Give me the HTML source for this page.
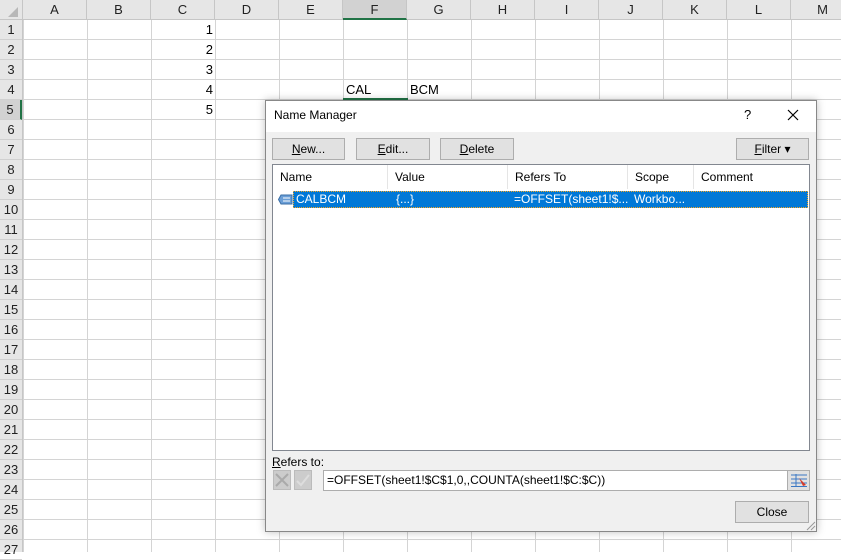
<!DOCTYPE html>
<html><head><meta charset="utf-8"><style>
*{margin:0;padding:0;box-sizing:border-box}
body{width:841px;height:552px;overflow:hidden;background:#fff;font-family:"Liberation Sans",sans-serif;font-size:13px;color:#000;position:relative}
.abs{position:absolute}
#grid{left:23px;top:20px;width:818px;height:532px;
background-image:linear-gradient(to right,#d4d4d4 1px,transparent 1px),linear-gradient(to bottom,#d4d4d4 1px,transparent 1px);
background-size:64px 20px;background-position:0px 19px,0 19px}
#colh{left:0;top:0;width:841px;height:20px;background:#e6e6e6;border-bottom:1px solid #c6c6c6}
#rowh{left:0;top:20px;width:23px;height:532px;background:#e6e6e6;border-right:1px solid #c6c6c6}
.ch{position:absolute;top:0;height:20px;line-height:20px;text-align:center;width:64px;border-right:1px solid #c6c6c6;font-size:13px;color:#222}
.rh{position:absolute;left:0;width:22px;height:20px;line-height:20px;text-align:center;font-size:13px;color:#222;border-bottom:1px solid #d0d0d0}
.num{position:absolute;width:60px;text-align:right;font-size:13px;height:20px;line-height:20px}
#dlg{left:265px;top:100px;width:552px;height:432px;background:#f0f0f0;border:1px solid #888;box-shadow:0 0 8px rgba(0,0,0,.25)}
.btn{position:absolute;height:22px;background:#e1e1e1;border:1px solid #adadad;text-align:center;line-height:20px;font-size:12px}
.hd{position:absolute;top:0;height:24px;line-height:24px;padding-left:7px;border-right:1px solid #e5e5e5;font-size:12px}
</style></head><body>
<div id="grid" class="abs"></div>
<div id="colh" class="abs">
<div class="abs" style="left:0;top:0;width:23px;height:20px;border-right:1px solid #c6c6c6"></div>
<div class="abs" style="left:8px;top:7px;width:0;height:0;border-left:10px solid transparent;border-bottom:10px solid #b8b8b8"></div>
<div class="ch" style="left:23px">A</div><div class="ch" style="left:87px">B</div><div class="ch" style="left:151px">C</div><div class="ch" style="left:215px">D</div><div class="ch" style="left:279px">E</div><div class="ch" style="left:343px;background:#d2d2d2;border-bottom:2px solid #217346">F</div><div class="ch" style="left:407px">G</div><div class="ch" style="left:471px">H</div><div class="ch" style="left:535px">I</div><div class="ch" style="left:599px">J</div><div class="ch" style="left:663px">K</div><div class="ch" style="left:727px">L</div><div class="ch" style="left:791px">M</div>
</div>
<div id="rowh" class="abs">
<div class="rh" style="top:0">1</div><div class="rh" style="top:20px">2</div><div class="rh" style="top:40px">3</div><div class="rh" style="top:60px">4</div><div class="rh" style="top:80px;background:#d2d2d2;border-right:2px solid #217346">5</div><div class="rh" style="top:100px">6</div><div class="rh" style="top:120px">7</div><div class="rh" style="top:140px">8</div><div class="rh" style="top:160px">9</div><div class="rh" style="top:180px">10</div><div class="rh" style="top:200px">11</div><div class="rh" style="top:220px">12</div><div class="rh" style="top:240px">13</div><div class="rh" style="top:260px">14</div><div class="rh" style="top:280px">15</div><div class="rh" style="top:300px">16</div><div class="rh" style="top:320px">17</div><div class="rh" style="top:340px">18</div><div class="rh" style="top:360px">19</div><div class="rh" style="top:380px">20</div><div class="rh" style="top:400px">21</div><div class="rh" style="top:420px">22</div><div class="rh" style="top:440px">23</div><div class="rh" style="top:460px">24</div><div class="rh" style="top:480px">25</div><div class="rh" style="top:500px">26</div><div class="rh" style="top:520px">27</div>
</div>
<div class="num" style="left:153px;top:20px">1</div>
<div class="num" style="left:153px;top:40px">2</div>
<div class="num" style="left:153px;top:60px">3</div>
<div class="num" style="left:153px;top:80px">4</div>
<div class="num" style="left:153px;top:100px">5</div>
<div class="abs" style="left:346px;top:80px;height:20px;line-height:20px">CAL</div>
<div class="abs" style="left:410px;top:80px;height:20px;line-height:20px">BCM</div>
<div class="abs" style="left:343px;top:98px;width:65px;height:2px;background:#217346"></div>

<div id="dlg" class="abs">
<div class="abs" style="left:0;top:0;width:550px;height:31px;background:#fff"></div>
<div class="abs" style="left:8px;top:7px;font-size:12px">Name Manager</div>
<div class="abs" style="left:478px;top:6px;font-size:13px">?</div>
<svg class="abs" style="left:521px;top:8px" width="12" height="12"><path d="M1 1L11 11M11 1L1 11" stroke="#000" stroke-width="1.2"/></svg>
<div class="btn" style="left:6px;top:37px;width:73px"><u>N</u>ew...</div>
<div class="btn" style="left:90px;top:37px;width:74px"><u>E</u>dit...</div>
<div class="btn" style="left:174px;top:37px;width:74px"><u>D</u>elete</div>
<div class="btn" style="left:470px;top:37px;width:73px"><u>F</u>ilter &#9662;</div>
<div class="abs" style="left:6px;top:63px;width:538px;height:287px;background:#fff;border:1px solid #828790">
<div class="hd" style="left:0;width:115px">Name</div>
<div class="hd" style="left:115px;width:120px">Value</div>
<div class="hd" style="left:235px;width:120px">Refers To</div>
<div class="hd" style="left:355px;width:66px">Scope</div>
<div class="hd" style="left:421px;width:115px;border-right:none">Comment</div>
<svg class="abs" style="left:5px;top:29px" width="15" height="11"><path d="M3 1H14V10H3L0.5 5.5Z" fill="#6a9ed6" stroke="#3a6ea6"/><path d="M5 4H12M5 7H12" stroke="#fff"/></svg>
<div class="abs" style="left:20px;top:26px;width:515px;height:17px;background:#0078d7;border:1px dotted #f5a623;color:#fff;font-size:12px;line-height:15px">
<span class="abs" style="left:2px">CALBCM</span><span class="abs" style="left:102px">{...}</span><span class="abs" style="left:220px">=OFFSET(sheet1!$...</span><span class="abs" style="left:340px">Workbo...</span>
</div>
</div>
<div class="abs" style="left:6px;top:354px;font-size:12px"><u>R</u>efers to:</div>
<div class="abs" style="left:7px;top:369px;width:18px;height:20px;background:#ccc;border:1px solid #bbb"></div>
<svg class="abs" style="left:9px;top:372px" width="14" height="14"><path d="M1 1L13 13M13 1L1 13" stroke="#aaa" stroke-width="2"/></svg>
<div class="abs" style="left:28px;top:369px;width:18px;height:20px;background:#ccc;border:1px solid #bbb"></div>
<svg class="abs" style="left:30px;top:372px" width="14" height="14"><path d="M1 8L5 12L13 2" stroke="#ddd" stroke-width="2" fill="none"/></svg>
<div class="abs" style="left:57px;top:369px;width:487px;height:21px;background:#fff;border:1px solid #adadad;font-size:12px;line-height:19px;padding-left:3px">=OFFSET(sheet1!$C$1,0,,COUNTA(sheet1!$C:$C))</div>
<div class="abs" style="left:521px;top:369px;width:23px;height:21px;background:#e1e1e1;border:1px solid #adadad"></div>
<svg class="abs" style="left:525px;top:373px" width="16" height="13"><path d="M0 1H16M0 5H16M0 9H16M0 12.5H16M5 0V13" stroke="#3b78c4"/><path d="M8 4L15 11L12 12Z" fill="#d63b2b"/></svg>
<div class="btn" style="left:469px;top:400px;width:74px;font-size:12px">Close</div>
<svg class="abs" style="left:538px;top:418px" width="12" height="12"><path d="M11 3L3 11M11 7L7 11" stroke="#999"/></svg>
</div>
</body></html>
